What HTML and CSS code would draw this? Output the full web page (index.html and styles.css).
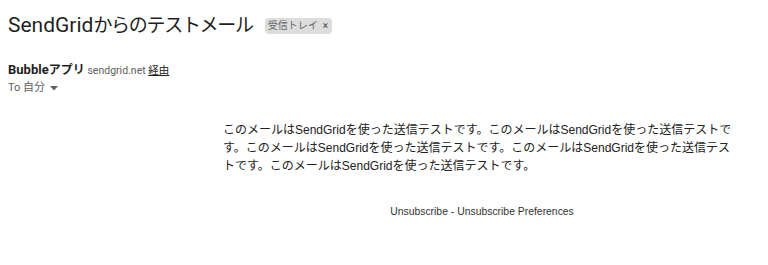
FILE: index.html
```html
<!DOCTYPE html>
<html lang="ja">
<head>
<meta charset="utf-8">
<link rel="stylesheet" href="styles.css">
</head>
<body>
<div class="page">
  <div class="subject-row">
    <h1 class="subject">SendGrid<span class="subject-ja">からのテストメール</span></h1>
    <span class="label">受信トレイ<span class="label-x">×</span></span>
  </div>
  <div class="sender">
    <div class="from"><span class="name">Bubble<span class="name-ja">アプリ</span></span> <span class="via">sendgrid.net <u class="via-link">経由</u></span></div>
    <div class="to">To 自分 <svg class="caret" width="8" height="5" viewBox="0 0 8 5"><path d="M0 0h8L4 4.5z" fill="#5f6368"/></svg></div>
  </div>
  <div class="mail-body">
    <p class="body-text">このメールはSendGridを使った送信テストです。このメールはSendGridを使った送信テストです。このメールはSendGridを使った送信テストです。このメールはSendGridを使った送信テストです。このメールはSendGridを使った送信テストです。</p>
    <p class="footer">Unsubscribe - Unsubscribe Preferences</p>
  </div>
</div>
</body>
</html>
```

FILE: styles.css
```css
html, body {
  margin: 0;
  padding: 0;
  background: #ffffff;
}
.page {
  padding: 0 0 0 8px;
  font-family: Roboto, "Noto Sans CJK JP", sans-serif;
  color: #202124;
}
.subject-row {
  display: flex;
  align-items: center;
  height: 50px;
  gap: 12px;
}
.subject {
  margin: 0;
  font-size: 21px;
  font-weight: 400;
  color: #1f1f1f;
  line-height: 28px;
}
.subject-ja {
  font-size: 19px;
  letter-spacing: -1.3px;
}
.label {
  display: inline-flex;
  align-items: center;
  background: #dddddd;
  color: #666666;
  font-size: 10px;
  height: 16px;
  line-height: 16px;
  padding: 0 4px 0 3px;
  border-radius: 4px;
  margin-top: 2px;
}
.label-x {
  margin-left: 5px;
  font-size: 10px;
  color: #444;
}
.sender {
  margin-top: 11px;
}
.from {
  font-size: 11px;
  line-height: 18px;
}
.name {
  font-weight: 700;
  font-size: 13px;
  color: #1f1f1f;
}
.name-ja {
  font-size: 12px;
}
.via {
  color: #5e5e5e;
  font-size: 10.5px;
}
.via-link {
  color: #222;
}
.to {
  font-size: 11px;
  line-height: 16px;
  color: #5e5e5e;
  display: flex;
  align-items: center;
  gap: 4px;
}
.caret {
  margin-left: 1px;
}
.mail-body {
  margin: 25px 0 0 215px;
  width: 518px;
  font-family: "Liberation Sans", "Noto Sans CJK JP", sans-serif;
}
.body-text {
  margin: 0;
  font-size: 12px;
  line-height: 18px;
  color: #222222;
}
.footer {
  margin: 30px 0 0;
  text-align: center;
  font-size: 10.4px;
  line-height: 14px;
  color: #333333;
}
```
